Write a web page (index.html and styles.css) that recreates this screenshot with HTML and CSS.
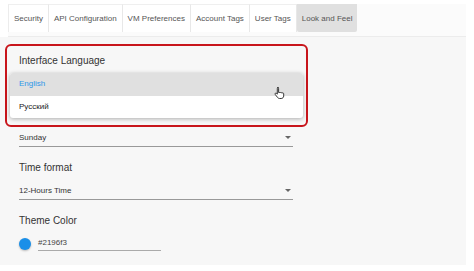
FILE: index.html
```html
<!DOCTYPE html>
<html>
<head>
<meta charset="utf-8">
<link rel="stylesheet" href="styles.css">
</head>
<body>
<div class="page">
  <div class="tabbar">
    <div class="tab">Security</div>
    <div class="tab">API Configuration</div>
    <div class="tab">VM Preferences</div>
    <div class="tab">Account Tags</div>
    <div class="tab">User Tags</div>
    <div class="tab active">Look and Feel</div>
  </div>
  <div class="panel">
    <div class="highlight">
      <div class="label lang-label">Interface Language</div>
      <div class="menu">
        <div class="menu-item selected">English
          <svg class="cursor" width="14" height="14" viewBox="0 0 14 14"><path d="M4.5 1.5c.7 0 1.1.5 1.1 1.1V6.5l.4-.1c.6-.1 1 .2 1.1.6.2-.5.7-.7 1.2-.5.3.1.5.4.6.7.3-.4.8-.5 1.2-.3.4.2.6.6.6 1V10c0 1.4-1.1 2.5-2.5 2.5H6.6c-.8 0-1.5-.4-2-1L2.3 8.6c-.4-.5-.3-1.1.1-1.4.4-.3 1-.2 1.3.2l.6.8V2.6c0-.6.4-1.1 1.1-1.1z" fill="#fff" stroke="#222" stroke-width="0.9"/></svg>
        </div>
        <div class="menu-item">Русский</div>
      </div>
    </div>
    <div class="field first">
      <div class="select"><span>Sunday</span><span class="caret"></span></div>
    </div>
    <div class="field">
      <div class="label">Time format</div>
      <div class="select"><span>12-Hours Time</span><span class="caret"></span></div>
    </div>
    <div class="field">
      <div class="label">Theme Color</div>
      <div class="color-row">
        <span class="swatch"></span>
        <div class="color-input">#2196f3</div>
      </div>
    </div>
  </div>
</div>
</body>
</html>
```

FILE: styles.css
```css
html, body {
  margin: 0;
  padding: 0;
  background: #ffffff;
  font-family: "Liberation Sans", Arial, sans-serif;
}
.page {
  width: 466px;
  height: 265px;
  display: flex;
  flex-direction: column;
}
.tabbar {
  margin: 4px 0 0 8px;
  height: 28px;
  display: flex;
  background: #fbfbfb;
  border-bottom: 1px solid #ececec;
  padding-bottom: 4px;
}
.tab {
  display: flex;
  align-items: center;
  padding: 0 5px;
  font-size: 8px;
  color: #555;
  background: #ffffff;
  border-right: 1px solid #e8e8e8;
  border-top: 1px solid #efefef;
}
.tab:first-child { border-left: 1px solid #ececec; }
.tab.active {
  background: #e0e0e0;
  border-right: none;
  border-top-color: #e0e0e0;
  border-radius: 0 0 2px 2px;
}
.panel {
  flex: 1;
  background: #f7f7f7;
  padding: 7px 0 0 5px;
}
.highlight {
  width: 299px;
  height: 79px;
  border: 2px solid #c8151b;
  border-radius: 6px;
  box-sizing: content-box;
  position: relative;
}
.label {
  font-size: 10px;
  color: #333;
  line-height: 13px;
}
.lang-label {
  padding: 8px 0 0 12px;
  height: 19px;
}
.menu {
  margin: 0 3px;
  background: #fff;
  box-shadow: 0 1px 4px rgba(0,0,0,0.3);
  border-radius: 3px;
}
.menu-item {
  height: 22px;
  line-height: 22px;
  font-size: 8px;
  padding-left: 9px;
  color: #222;
  position: relative;
}
.menu-item.selected {
  background: #e0e0e0;
  color: #2f96e8;
  height: 23px;
  border-radius: 3px 3px 0 0;
}
.cursor {
  position: absolute;
  left: 263px;
  top: 13px;
}
.field {
  margin-left: 14px;
  width: 274px;
}
.field.first { margin-top: 4px; }
.field .label { margin-top: 14px; margin-bottom: 10px; }
.select {
  display: flex;
  justify-content: space-between;
  align-items: center;
  font-size: 8px;
  color: #333;
  height: 13px;
  border-bottom: 1px solid #999;
  padding-bottom: 2px;
}
.caret {
  width: 0;
  height: 0;
  border-left: 3px solid transparent;
  border-right: 3px solid transparent;
  border-top: 3px solid #666;
  margin-right: 2px;
}
.color-row {
  display: flex;
  align-items: center;
  gap: 7px;
}
.swatch {
  width: 12px;
  height: 12px;
  border-radius: 50%;
  background: #1a8fe8;
  box-shadow: 0 1px 2px rgba(0,0,0,0.25);
}
.color-input {
  width: 123px;
  font-size: 8px;
  color: #444;
  border-bottom: 1px solid #aaa;
  padding-bottom: 3px;
  padding-top: 1px;
}
```
